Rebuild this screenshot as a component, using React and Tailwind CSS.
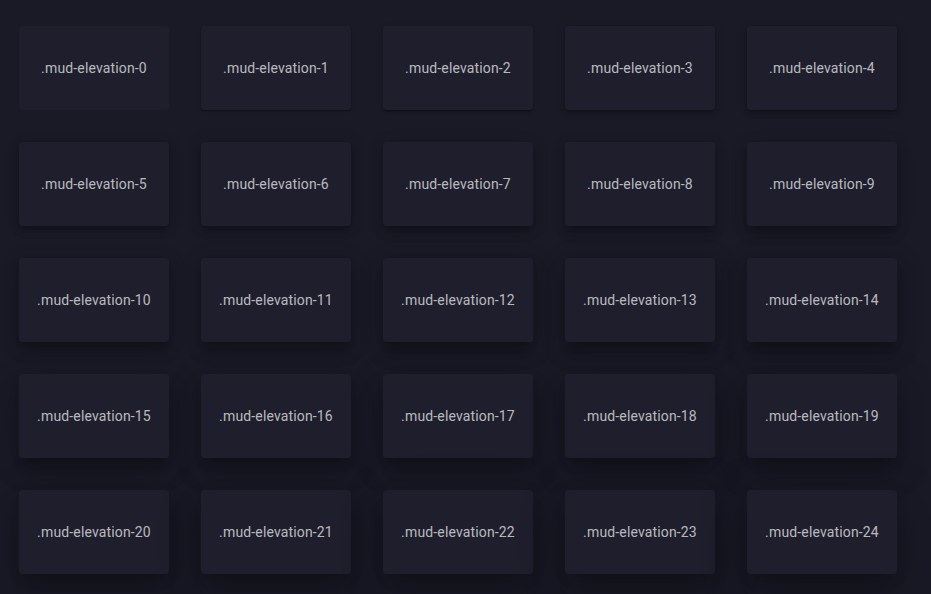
const shadows = [
  "shadow-none",
  "shadow-[0px_2px_1px_-1px_rgba(0,0,0,0.2),0px_1px_1px_0px_rgba(0,0,0,0.14),0px_1px_3px_0px_rgba(0,0,0,0.12)]",
  "shadow-[0px_3px_1px_-2px_rgba(0,0,0,0.2),0px_2px_2px_0px_rgba(0,0,0,0.14),0px_1px_5px_0px_rgba(0,0,0,0.12)]",
  "shadow-[0px_3px_3px_-2px_rgba(0,0,0,0.2),0px_3px_4px_0px_rgba(0,0,0,0.14),0px_1px_8px_0px_rgba(0,0,0,0.12)]",
  "shadow-[0px_2px_4px_-1px_rgba(0,0,0,0.2),0px_4px_5px_0px_rgba(0,0,0,0.14),0px_1px_10px_0px_rgba(0,0,0,0.12)]",
  "shadow-[0px_3px_5px_-1px_rgba(0,0,0,0.2),0px_5px_8px_0px_rgba(0,0,0,0.14),0px_1px_14px_0px_rgba(0,0,0,0.12)]",
  "shadow-[0px_3px_5px_-1px_rgba(0,0,0,0.2),0px_6px_10px_0px_rgba(0,0,0,0.14),0px_1px_18px_0px_rgba(0,0,0,0.12)]",
  "shadow-[0px_4px_5px_-2px_rgba(0,0,0,0.2),0px_7px_10px_1px_rgba(0,0,0,0.14),0px_2px_16px_1px_rgba(0,0,0,0.12)]",
  "shadow-[0px_5px_5px_-3px_rgba(0,0,0,0.2),0px_8px_10px_1px_rgba(0,0,0,0.14),0px_3px_14px_2px_rgba(0,0,0,0.12)]",
  "shadow-[0px_5px_6px_-3px_rgba(0,0,0,0.2),0px_9px_12px_1px_rgba(0,0,0,0.14),0px_3px_16px_2px_rgba(0,0,0,0.12)]",
  "shadow-[0px_6px_6px_-3px_rgba(0,0,0,0.2),0px_10px_14px_1px_rgba(0,0,0,0.14),0px_4px_18px_3px_rgba(0,0,0,0.12)]",
  "shadow-[0px_6px_7px_-4px_rgba(0,0,0,0.2),0px_11px_15px_1px_rgba(0,0,0,0.14),0px_4px_20px_3px_rgba(0,0,0,0.12)]",
  "shadow-[0px_7px_8px_-4px_rgba(0,0,0,0.2),0px_12px_17px_2px_rgba(0,0,0,0.14),0px_5px_22px_4px_rgba(0,0,0,0.12)]",
  "shadow-[0px_7px_8px_-4px_rgba(0,0,0,0.2),0px_13px_19px_2px_rgba(0,0,0,0.14),0px_5px_24px_4px_rgba(0,0,0,0.12)]",
  "shadow-[0px_7px_9px_-4px_rgba(0,0,0,0.2),0px_14px_21px_2px_rgba(0,0,0,0.14),0px_5px_26px_4px_rgba(0,0,0,0.12)]",
  "shadow-[0px_8px_9px_-5px_rgba(0,0,0,0.2),0px_15px_22px_2px_rgba(0,0,0,0.14),0px_6px_28px_5px_rgba(0,0,0,0.12)]",
  "shadow-[0px_8px_10px_-5px_rgba(0,0,0,0.2),0px_16px_24px_2px_rgba(0,0,0,0.14),0px_6px_30px_5px_rgba(0,0,0,0.12)]",
  "shadow-[0px_8px_11px_-5px_rgba(0,0,0,0.2),0px_17px_26px_2px_rgba(0,0,0,0.14),0px_6px_32px_5px_rgba(0,0,0,0.12)]",
  "shadow-[0px_9px_11px_-5px_rgba(0,0,0,0.2),0px_18px_28px_2px_rgba(0,0,0,0.14),0px_7px_34px_6px_rgba(0,0,0,0.12)]",
  "shadow-[0px_9px_12px_-6px_rgba(0,0,0,0.2),0px_19px_29px_2px_rgba(0,0,0,0.14),0px_7px_36px_6px_rgba(0,0,0,0.12)]",
  "shadow-[0px_10px_13px_-6px_rgba(0,0,0,0.2),0px_20px_31px_3px_rgba(0,0,0,0.14),0px_8px_38px_7px_rgba(0,0,0,0.12)]",
  "shadow-[0px_10px_13px_-6px_rgba(0,0,0,0.2),0px_21px_33px_3px_rgba(0,0,0,0.14),0px_8px_40px_7px_rgba(0,0,0,0.12)]",
  "shadow-[0px_10px_14px_-6px_rgba(0,0,0,0.2),0px_22px_35px_3px_rgba(0,0,0,0.14),0px_8px_42px_7px_rgba(0,0,0,0.12)]",
  "shadow-[0px_11px_14px_-7px_rgba(0,0,0,0.2),0px_23px_36px_3px_rgba(0,0,0,0.14),0px_9px_44px_8px_rgba(0,0,0,0.12)]",
  "shadow-[0px_11px_15px_-7px_rgba(0,0,0,0.2),0px_24px_38px_3px_rgba(0,0,0,0.14),0px_9px_46px_8px_rgba(0,0,0,0.12)]",
];

export default function App() {
  return (
    <div
      className="min-h-[594px] w-full bg-[#1a1a27] pl-[19px] pt-[26px] pb-[20px]"
      style={{ fontFamily: "Roboto, 'Liberation Sans', sans-serif" }}
    >
      <div className="grid grid-cols-[repeat(5,150px)] gap-x-[32px] gap-y-[32px]">
        {shadows.map((s, i) => (
          <div
            key={i}
            className={`flex h-[84px] w-[150px] items-center justify-center rounded-[4px] bg-[#1e1e2d] text-[14px] leading-[1.43] tracking-[0.01071em] text-[rgba(255,255,255,0.7)] ${s}`}
          >
            .mud-elevation-{i}
          </div>
        ))}
      </div>
    </div>
  );
}
